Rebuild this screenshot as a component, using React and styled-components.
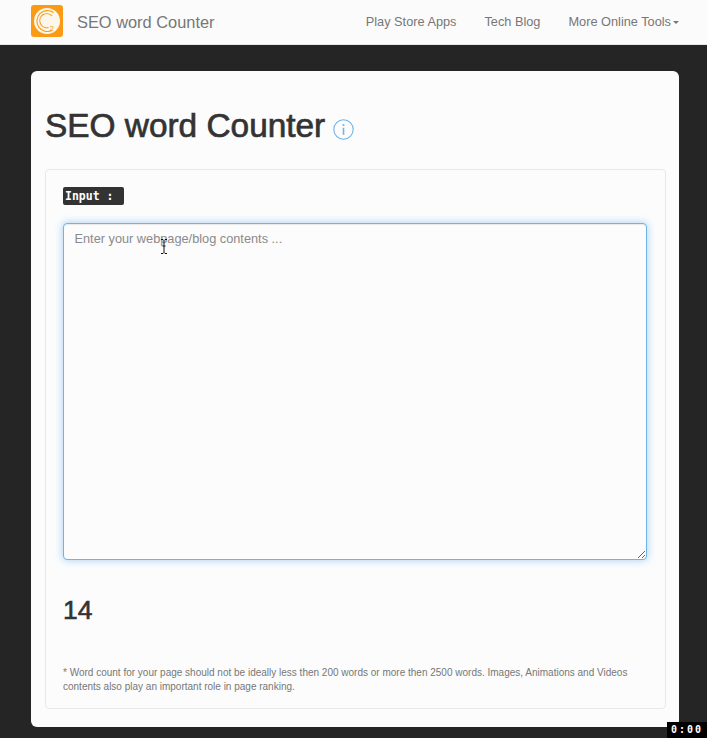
import React from 'react';
import styled, { createGlobalStyle } from 'styled-components';

const GlobalStyle = createGlobalStyle`
    html, body {
        margin: 0;
        padding: 0;
        background: #252525;
    }
    body {
        font-family: "Liberation Sans", Arial, sans-serif;
        font-size: 13px;
        line-height: 20px;
        color: #333;
        position: relative;
        height: 738px;
        overflow: hidden;
    }
`;

const Navbar = styled.nav`
    height: 44px;
    background: #fbfbfb;
    border-bottom: 1px solid #e7e7e7;
    display: flex;
    align-items: center;
    justify-content: space-between;
    padding: 0 28px 0 31px;
`;

const Brand = styled.div`
    display: flex;
    align-items: center;
    gap: 14px;
    font-size: 16.4px;
    color: #777;
`;

const NavLinks = styled.div`
    display: flex;
    gap: 28px;
`;

const NavLink = styled.a`
    color: #777;
    font-size: 12.75px;
    display: flex;
    align-items: center;
`;

const Caret = styled.span`
    width: 0;
    height: 0;
    margin-left: 2px;
    border-top: 3px solid #777;
    border-left: 3.5px solid transparent;
    border-right: 3.5px solid transparent;
`;

const Main = styled.main`
    margin: 26px 28px 0 31px;
    height: 656px;
    box-sizing: border-box;
    background: #fcfcfc;
    border-radius: 6px;
    padding: 0 13px 18px 14px;
    display: flex;
    flex-direction: column;
`;

const Heading = styled.h1`
    margin: 35px 0 0;
    height: 63px;
    display: flex;
    align-items: flex-start;
    gap: 8px;
    font-size: 33.4px;
    line-height: 40px;
    font-weight: 500;
    color: #333;
    -webkit-text-stroke: 0.7px #333;
`;

const InfoIcon = styled.svg`
    width: 21px;
    height: 21px;
    margin-top: 13px;
`;

const Panel = styled.section`
    flex: 1;
    border: 1px solid #e8e8e8;
    border-radius: 4px;
    padding: 17px 18px 14px 17px;
    display: flex;
    flex-direction: column;
`;

const Label = styled.code`
    align-self: flex-start;
    width: 61px;
    height: 18px;
    box-sizing: border-box;
    padding-left: 2px;
    background: #333;
    color: #fff;
    border-radius: 2px;
    font-family: "DejaVu Sans Mono", "Liberation Mono", monospace;
    font-size: 11.5px;
    font-weight: 700;
    line-height: 18px;
`;

const TextArea = styled.textarea`
    display: block;
    height: 337px;
    margin-top: 18px;
    box-sizing: border-box;
    padding: 5px 10.5px;
    background: #fcfcfc;
    border: 1px solid #6db5e8;
    border-radius: 4px;
    outline: 0;
    box-shadow: inset 0 1px 1px rgba(0, 0, 0, 0.075), 0 0 8px rgba(102, 175, 233, 0.6);
    font-family: "Liberation Sans", Arial, sans-serif;
    font-size: 12.75px;
    line-height: 20px;
    color: #555;
    &::placeholder {
        color: #8a8a8a;
        opacity: 1;
    }
`;

const Count = styled.div`
    margin-top: 34px;
    font-size: 26.4px;
    line-height: 33px;
    font-weight: 500;
    color: #333;
    -webkit-text-stroke: 0.6px #333;
`;

const Note = styled.p`
    margin: auto 0 0;
    font-size: 10px;
    line-height: 14px;
    color: #777;
`;

const TextCursor = styled.svg`
    position: absolute;
    left: 160px;
    top: 239px;
    width: 8px;
    height: 15px;
`;

const Timer = styled.div`
    position: absolute;
    right: 0;
    bottom: 0;
    width: 40px;
    height: 16px;
    background: #000;
    color: #fff;
    font-family: "DejaVu Sans Mono", monospace;
    font-size: 10px;
    font-weight: 700;
    line-height: 16px;
    letter-spacing: 2px;
    text-align: center;
`;

const LogoMark = styled.svg`
    width: 32px;
    height: 32px;
    margin-top: -2px;
`;

function Logo() {
    return (
        <LogoMark viewBox="0 0 32 32">
            <rect width="32" height="32" rx="3" fill="#fb9a14" />
            <circle cx="16" cy="16" r="13" fill="#fdf6ea" />
            <path d="M22.5 7.5A10.5 10.5 0 1 0 21 25.5" fill="none" stroke="#fb9a14" strokeWidth="1.1" />
            <path d="M21 11A7 7 0 1 0 17.5 22.5" fill="none" stroke="#fb9a14" strokeWidth="1.1" />
            <text x="18.5" y="25.5" fontSize="8" fontFamily="Liberation Sans, sans-serif" fill="#fb9a14">2</text>
        </LogoMark>
    );
}

export default function App() {
    return (
        <>
            <GlobalStyle />
            <Navbar>
                <Brand>
                    <Logo />
                    SEO word Counter
                </Brand>
                <NavLinks>
                    <NavLink>Play Store Apps</NavLink>
                    <NavLink>Tech Blog</NavLink>
                    <NavLink>More Online Tools<Caret /></NavLink>
                </NavLinks>
            </Navbar>
            <Main>
                <Heading>
                    SEO word Counter
                    <InfoIcon viewBox="0 0 21 21">
                        <circle cx="10.5" cy="10.5" r="9.7" fill="none" stroke="#6db5e8" strokeWidth="1.1" />
                        <circle cx="10.5" cy="6" r="1.1" fill="#6db5e8" />
                        <rect x="9.7" y="8.8" width="1.6" height="7" fill="#6db5e8" />
                    </InfoIcon>
                </Heading>
                <Panel>
                    <Label>Input :</Label>
                    <TextArea placeholder="Enter your webpage/blog contents ..." />
                    <Count>14</Count>
                    <Note>
                        * Word count for your page should not be ideally less then 200 words or more then 2500 words. Images, Animations and Videos contents also play an important role in page ranking.
                    </Note>
                </Panel>
            </Main>
            <TextCursor viewBox="0 0 8 15">
                <path d="M1 .5h2l1 1 1-1h2M4 1.5v12M1 14.5h2l1-1 1 1h2M2.5 7h3" fill="none" stroke="#111" strokeWidth="1" />
            </TextCursor>
            <Timer>0:00</Timer>
        </>
    );
}
